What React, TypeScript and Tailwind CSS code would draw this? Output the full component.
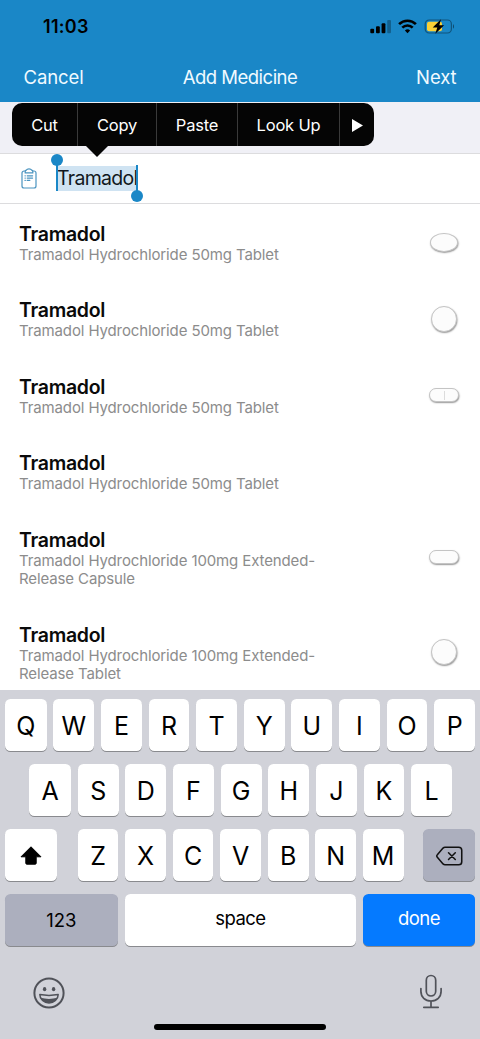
import type { ReactNode } from 'react';
import clsx from 'clsx';

type PillShape = 'oval' | 'round' | 'scored' | 'capsule' | 'none';

interface Medicine {
  name: string;
  detail: string[];
  shape: PillShape;
}

const medicines: Medicine[] = [
  { name: 'Tramadol', detail: ['Tramadol Hydrochloride 50mg Tablet'], shape: 'oval' },
  { name: 'Tramadol', detail: ['Tramadol Hydrochloride 50mg Tablet'], shape: 'round' },
  { name: 'Tramadol', detail: ['Tramadol Hydrochloride 50mg Tablet'], shape: 'scored' },
  { name: 'Tramadol', detail: ['Tramadol Hydrochloride 50mg Tablet'], shape: 'none' },
  { name: 'Tramadol', detail: ['Tramadol Hydrochloride 100mg Extended-', 'Release Capsule'], shape: 'capsule' },
  { name: 'Tramadol', detail: ['Tramadol Hydrochloride 100mg Extended-', 'Release Tablet'], shape: 'round' },
];

const pillSizes = {
  oval: 'w-[28px] h-[19px] rounded-[50%]',
  round: 'w-[26px] h-[26px] rounded-full',
  scored: 'w-[30px] h-[14px] rounded-full',
  capsule: 'w-[30px] h-[14px] rounded-full',
};

function Pill({ shape }: { shape: PillShape }) {
  if (shape === 'none') return null;
  return (
    <div className="flex w-8 justify-center">
      <div
        className={clsx(
          'flex items-center justify-center border border-[#c4c4c4] bg-[#fcfcfc] shadow-[0.5px_1px_1.5px_#999]',
          pillSizes[shape]
        )}
      >
        {shape === 'scored' && <div className="h-[9px] w-px bg-[#dcdcdc]" />}
      </div>
    </div>
  );
}

function StatusBar() {
  return (
    <div className="flex h-[53px] items-center justify-between pr-[24px] pl-[43px]">
      <span className="text-[18px] font-semibold tracking-[0.3px] text-black">11:03</span>
      <div className="flex items-center">
        {/* Signal */}
        <svg width="22" height="15" viewBox="0 0 22 15">
          <rect x="0.3" y="9.8" width="3.8" height="4.4" rx="1" />
          <rect x="6" y="7.2" width="3.8" height="7" rx="1" />
          <rect x="11.6" y="4.2" width="3.8" height="10" rx="1" />
          <rect x="17.2" y="1" width="3.8" height="13.2" rx="1" fillOpacity="0.28" />
        </svg>
        {/* Wifi */}
        <svg className="ml-[6px]" width="19" height="15" viewBox="0 0 19 15" fill="none" stroke="#000" strokeWidth="2.6">
          <path d="M1.1 5.2a11.9 11.9 0 0 1 16.8 0" />
          <path d="M4.3 8.7a7.4 7.4 0 0 1 10.4 0" />
          <path d="M9.5 14.2 6.9 11.5a3.8 3.8 0 0 1 5.2 0Z" fill="#000" stroke="none" />
        </svg>
        {/* Battery */}
        <svg className="ml-[7px]" width="32" height="17" viewBox="0 0 32 17">
          <rect x="1.2" y="2" width="26.2" height="13" rx="4" fill="none" stroke="#0d4464" strokeOpacity="0.75" strokeWidth="1.2" />
          <rect x="3" y="3.7" width="15" height="9.6" rx="2" fill="#fbd136" />
          <path d="M29 6.3c1.2.5 1.2 3.9 0 4.4Z" fill="#0d4464" />
          <path d="M17 1.2 8.7 9.4h4.6l-2 6.4 8.8-8.6h-4.8Z" />
        </svg>
      </div>
    </div>
  );
}

function EditMenu() {
  return (
    <div className="absolute top-[103px] left-[12px] z-10">
      <div className="flex h-[43px] w-[362px] overflow-hidden rounded-[10px] bg-[#050505] text-[16.5px] tracking-[-0.2px] text-white *:pt-px">
        <div className="flex w-[66px] items-center justify-center border-r border-[#3a3a3a]">Cut</div>
        <div className="flex w-[79px] items-center justify-center border-r border-[#3a3a3a]">Copy</div>
        <div className="flex w-[81px] items-center justify-center border-r border-[#3a3a3a]">Paste</div>
        <div className="flex w-[102px] items-center justify-center border-r border-[#3a3a3a]">Look Up</div>
        <div className="flex flex-1 items-center justify-center">
          <svg width="11" height="13" viewBox="0 0 11 13" fill="#fff">
            <path d="M0 0 11 6.5 0 13Z" />
          </svg>
        </div>
      </div>
      <svg className="ml-[74px]" width="22" height="11" viewBox="0 0 22 11">
        <path d="M0 0h22L11 11Z" fill="#050505" />
      </svg>
    </div>
  );
}

function SearchField() {
  return (
    <div className="flex h-[51px] items-center border-y border-[#dcdcde] bg-white pl-[21px]">
      <svg width="16" height="21" viewBox="0 0 16 21" fill="none" stroke="#4b94c0" strokeWidth="1.2" strokeLinecap="round">
        <path d="M4.2 3H3a2 2 0 0 0-2 2v13a2 2 0 0 0 2 2h10a2 2 0 0 0 2-2V5a2 2 0 0 0-2-2h-1.2" />
        <path d="M4.2 4.8V3.2c0-.7.5-1 1.2-1.1C5.8 1.2 6.7.8 8 .8s2.2.4 2.6 1.3c.7.1 1.2.4 1.2 1.1v1.6Z" />
        <path d="M4 7.8h.3M6.2 7.8h5.4M4 10.1h.3M6.2 10.1h5.4M4 12.4h.3M6.2 12.4h2.6" />
      </svg>
      <div className="relative ml-[20px] flex h-[25px] w-[80px] items-center bg-[#cfe3f2]">
        <span className="text-[19.5px] tracking-[-0.7px] whitespace-nowrap text-[#111820]">Tramadol</span>
        {/* Selection handles */}
        <div className="absolute -top-px -left-[1px] h-[26px] w-[2px] bg-[#1a87c7]" />
        <div className="absolute -top-[12px] -left-[6px] size-[12px] rounded-full bg-[#1a87c7]" />
        <div className="absolute -top-px -right-[1px] h-[26px] w-[2px] bg-[#1a87c7]" />
        <div className="absolute -right-[6px] -bottom-[11px] size-[12px] rounded-full bg-[#1a87c7]" />
      </div>
    </div>
  );
}

function MedicineRow({ medicine }: { medicine: Medicine }) {
  return (
    <div
      className={clsx(
        'flex shrink-0 items-center justify-between pr-[20px] pl-[19px]',
        medicine.detail.length > 1 ? 'h-[94.8px]' : 'h-[76.5px]'
      )}
    >
      <div className="pt-[2px]">
        <h2 className="text-[19.5px] leading-[23px] font-semibold tracking-[-0.3px] text-[#0a0a0a]">{medicine.name}</h2>
        {medicine.detail.map((line) => (
          <p key={line} className="text-[15px] leading-[18px] tracking-[-0.12px] whitespace-nowrap text-[#8c8c8c]">
            {line}
          </p>
        ))}
      </div>
      <Pill shape={medicine.shape} />
    </div>
  );
}

function Key({ className, children }: { className: string; children: ReactNode }) {
  return (
    <div
      className={clsx(
        'flex h-[52px] items-center justify-center rounded-[5.5px] text-black shadow-[0_1px_0_#898a8e]',
        className
      )}
    >
      {children}
    </div>
  );
}

function LetterKeys({ letters, wideFirst }: { letters: string; wideFirst?: boolean }) {
  return letters.split('').map((letter, i) => (
    <Key
      key={letter}
      className={clsx('bg-white pt-[3px] text-[25px]', wideFirst && i === 0 ? 'w-[42px]' : 'flex-1')}
    >
      {letter}
    </Key>
  ));
}

function Keyboard() {
  return (
    <div className="flex h-[349px] shrink-0 flex-col bg-[#d1d2d9] pt-[9px]">
      <div className="flex flex-col gap-[13px]">
        <div className="flex gap-[6.75px] pr-[5px] pl-[4.7px]">
          <LetterKeys letters="QWERTYUIOP" wideFirst />
        </div>
        <div className="flex gap-[6.75px] pr-[28px] pl-[29px]">
          <LetterKeys letters="ASDFGHJKL" wideFirst />
        </div>
        <div className="flex pr-[5px] pl-[4.7px]">
          <Key className="w-[52.3px] bg-white">
            <svg width="22" height="19" viewBox="0 0 22 19" stroke="#000" strokeLinejoin="round">
              <path d="M11 .8 21 10.8h-4.8v6.4a1 1 0 0 1-1 1H6.8a1 1 0 0 1-1-1v-6.4H1Z" />
            </svg>
          </Key>
          <div className="mr-[19.5px] ml-[20.7px] flex flex-1 gap-[6.75px]">
            <LetterKeys letters="ZXCVBNM" />
          </div>
          <Key className="w-[52px] bg-[#acafbe]">
            <svg className="mt-px" width="27" height="20" viewBox="0 0 28 20" fill="none" stroke="#111" strokeWidth="1.6" strokeLinecap="round" strokeLinejoin="round">
              <path d="M9.3.9h14.2a3.2 3.2 0 0 1 3.2 3.2v11.8a3.2 3.2 0 0 1-3.2 3.2H9.3c-.8 0-1.4-.3-2-.9L1.4 11.3c-.8-.8-.8-1.8 0-2.6l5.9-6.9c.6-.6 1.2-.9 2-.9Z" />
              <path d="m13 6.6 7 7M20 6.6l-7 7" />
            </svg>
          </Key>
        </div>
        <div className="flex gap-[7px] pr-[5px] pl-[4.7px] text-[18.5px]">
          <Key className="w-[113.3px] bg-[#acafbe] pt-px">123</Key>
          <Key className="flex-1 bg-white pb-[2px] tracking-[-0.55px]">space</Key>
          <Key className="w-[112px] bg-[#057aff] pb-[2px] tracking-[-0.5px]">
            <span className="text-white">done</span>
          </Key>
        </div>
      </div>
      <div className="mt-[28px] flex items-center justify-between pr-[37px] pl-[33px] text-[#505259]">
        {/* Emoji */}
        <svg className="mt-[2px]" width="32" height="32" viewBox="0 0 32 32" fill="none" stroke="currentColor">
          <circle cx="16" cy="16" r="14.6" strokeWidth="2" />
          <ellipse cx="11.6" cy="12.2" rx="1.7" ry="2.1" fill="currentColor" stroke="none" />
          <ellipse cx="20.6" cy="12.2" rx="1.7" ry="2.1" fill="currentColor" stroke="none" />
          <path d="M6.8 17.6c5.8 1 12.6 1 18.4 0 0 4.6-4.2 8.4-9.2 8.4s-9.2-3.8-9.2-8.4Z" strokeWidth="1.5" strokeLinejoin="round" />
          <path d="M7.6 20.8c5.2 1.5 11.6 1.5 16.8 0-1.4 3.3-4.6 5.2-8.4 5.2s-7-1.9-8.4-5.2Z" fill="currentColor" stroke="none" />
        </svg>
        {/* Dictation */}
        <svg width="24" height="35" viewBox="0 0 24 35" fill="none" stroke="currentColor" strokeWidth="1.7" strokeLinecap="round">
          <rect x="7.3" y="1.5" width="9.4" height="20.5" rx="4.7" />
          <path d="M1.9 14.5v2.7c0 5.8 4.2 9.8 10.1 9.8s10.1-4 10.1-9.8v-2.7M12 27v6M4.8 33.3h14.4" />
        </svg>
      </div>
      <div className="mx-auto mt-auto mb-[9px] h-[6px] w-[172px] rounded-full bg-black" />
    </div>
  );
}

export default function App() {
  return (
    <div className="relative flex h-[1039px] w-[480px] flex-col overflow-hidden bg-white font-['Inter','Liberation_Sans',sans-serif]">
      <header className="h-[102px] shrink-0 bg-[#1a87c7]">
        <StatusBar />
        <div className="grid grid-cols-3 items-center px-[23.5px] pt-[10px] text-[18.5px] leading-[28px] tracking-[-0.1px] text-[#f0faff]">
          <span>Cancel</span>
          <span className="text-center tracking-[-0.5px] whitespace-nowrap">Add Medicine</span>
          <span className="text-right">Next</span>
        </div>
      </header>
      <div className="h-[51px] shrink-0 bg-[#f0f0f6]" />
      <SearchField />
      <EditMenu />

      {/* Results */}
      <div className="flex min-h-0 flex-1 flex-col overflow-hidden">
        {medicines.map((medicine, i) => (
          <MedicineRow key={i} medicine={medicine} />
        ))}
      </div>

      <Keyboard />
    </div>
  );
}
